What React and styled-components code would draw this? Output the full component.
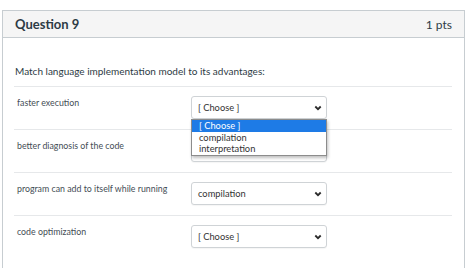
import React from 'react';
import styled, { createGlobalStyle } from 'styled-components';

const GlobalStyle = createGlobalStyle`
  body {
    margin: 0;
    background: #fff;
    font-family: Lato, "Open Sans", sans-serif;
    overflow: hidden;
  }
`;

const Card = styled.div`
  margin: 10px 0 0 2px;
  width: 463px;
  min-height: 270px;
  box-sizing: border-box;
  border: 1px solid #c7cdd1;
  border-bottom: none;
  background: #fff;
`;

const Header = styled.div`
  height: 26px;
  display: flex;
  align-items: center;
  justify-content: space-between;
  padding: 0 12px;
  background: #f5f5f5;
  border-bottom: 1px solid #c7cdd1;
  color: #2d3b45;
`;

const Title = styled.div`
  font-size: 13px;
  font-weight: 700;
`;

const Points = styled.div`
  font-size: 12px;
`;

const Body = styled.div`
  padding: 0 12px 0 11px;
`;

const Prompt = styled.p`
  margin: 0;
  padding: 26px 1px 8px;
  font-size: 10px;
  line-height: 14px;
  color: #2d3b45;
`;

const Row = styled.div`
  display: flex;
  align-items: flex-start;
  height: 33px;
  padding: 9px 0 0 3px;
  border-top: 1px solid #e6e8ea;
`;

const Label = styled.div`
  width: 174px;
  font-size: 8.8px;
  line-height: 14px;
  color: #444d55;
`;

const SelectBox = styled.div`
  position: relative;
  width: 136px;
  height: 23px;
  box-sizing: border-box;
  display: flex;
  align-items: center;
  justify-content: space-between;
  padding: 0 4px 0 6px;
  border: 1px solid #cfd3d6;
  border-radius: 3px;
  background: #fff;
  box-shadow: 0 1px 1px rgba(0, 0, 0, 0.04);
  font-size: 9.3px;
  color: #333;
`;

const OptionList = styled.div`
  position: absolute;
  top: 22px;
  left: -1px;
  width: 136px;
  box-sizing: border-box;
  border: 1px solid #8c8c8c;
  background: #fff;
  box-shadow: 1px 2px 3px rgba(0, 0, 0, 0.25);
  z-index: 2;
`;

const Option = styled.div`
  height: 11.7px;
  line-height: 11.7px;
  padding-left: 7px;
  font-size: 9.3px;
  background: ${p => (p.$active ? '#1e7be6' : '#fff')};
  color: ${p => (p.$active ? '#fff' : '#333')};
`;

const Chevron = () => (
  <svg width="8" height="6" viewBox="0 0 8 6">
    <path d="M1.3 1.5 L4 4.2 L6.7 1.5" fill="none" stroke="#2b2b2b" strokeWidth="1.8" />
  </svg>
);

const OPTIONS = ['[ Choose ]', 'compilation', 'interpretation'];

const rows = [
  { label: 'faster execution', value: '[ Choose ]', open: true },
  { label: 'better diagnosis of the code', value: '[ Choose ]' },
  { label: 'program can add to itself while running', value: 'compilation' },
  { label: 'code optimization', value: '[ Choose ]' },
];

const Select = ({ value, open }) => (
  <SelectBox>
    <span>{value}</span>
    <Chevron />
    {open && (
      <OptionList>
        {OPTIONS.map(o => (
          <Option key={o} $active={o === value}>{o}</Option>
        ))}
      </OptionList>
    )}
  </SelectBox>
);

export default function App() {
  return (
    <>
      <GlobalStyle />
      <Card>
        <Header>
          <Title>Question 9</Title>
          <Points>1 pts</Points>
        </Header>
        <Body>
          <Prompt>Match language implementation model to its advantages:</Prompt>
          {rows.map(r => (
            <Row key={r.label}>
              <Label>{r.label}</Label>
              <Select value={r.value} open={r.open} />
            </Row>
          ))}
        </Body>
      </Card>
    </>
  );
}
